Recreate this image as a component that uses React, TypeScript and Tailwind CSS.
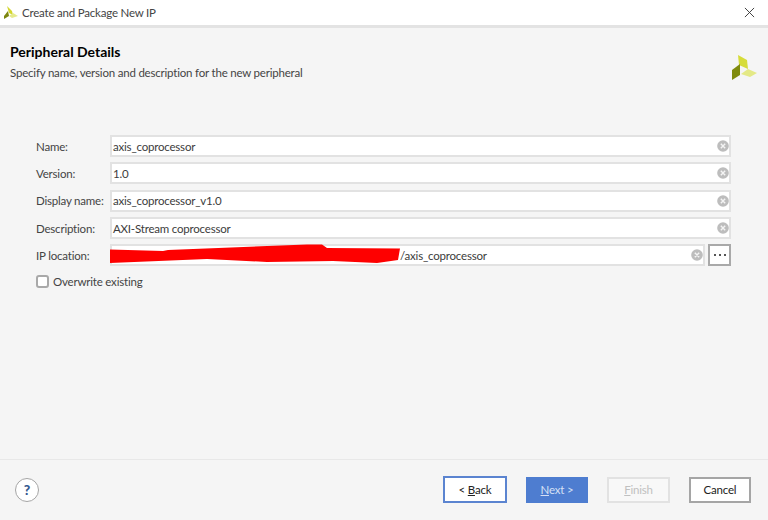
import React from "react";

const font = { fontFamily: 'Lato, "Noto Sans", sans-serif' };

function Logo({ className }: { className: string }) {
  return (
    <svg viewBox="0 0 25 25" className={className}>
      <polygon points="6,0 15,5 16,14 7,10" fill="#d6dc3a" />
      <polygon points="9,19 16,14 25,18 18,22" fill="#e4e986" />
      <polygon points="0,15 8,9 8,20 0,25" fill="#7f8a0c" />
    </svg>
  );
}

function TitleLogo() {
  return (
    <svg viewBox="0 0 15 15" className="w-[15px] h-[15px] shrink-0">
      <polygon points="4,1 9,6 10,10 6,8" fill="#d3d62e" />
      <polygon points="6,11 10,8 15,11 9,13" fill="#e6ea8c" />
      <polygon points="1,11 5,6 6,11 1,14" fill="#7c860f" />
    </svg>
  );
}

function ClearIcon() {
  return (
    <svg viewBox="0 0 12 12" className="w-[12px] h-[12px] shrink-0">
      <circle cx="6" cy="6" r="5.8" fill="#bdbdbd" />
      <path d="M3.8 3.8 L8.2 8.2 M8.2 3.8 L3.8 8.2" stroke="#f4f4f4" strokeWidth="1.4" />
    </svg>
  );
}

function Field({ label, value }: { label: string; value: string }) {
  return (
    <div className="flex items-center h-[22px]">
      <div className="w-[74px] shrink-0 text-[#444] whitespace-nowrap pt-[1px]">{label}</div>
      <div className="flex-1 h-full flex items-center justify-between bg-white border-2 border-[#e2e2e2] pl-[1px] pr-[0px] text-[#3c3c3c]">
        <span className="pt-[1px]">{value}</span>
        <ClearIcon />
      </div>
    </div>
  );
}

function Btn({ children, className }: { children: React.ReactNode; className: string }) {
  return (
    <div className={"h-[26px] flex items-center justify-center border-2 " + className}>{children}</div>
  );
}

export default function App() {
  return (
    <div style={font} className="w-[768px] h-[520px] flex flex-col bg-[#f5f5f5] text-[11.5px] tracking-[-0.2px] overflow-hidden">
      <div className="h-[25px] shrink-0 bg-white flex items-center pl-[3px] pr-[13px] text-[#444]">
        <TitleLogo />
        <span className="ml-[4px]">Create and Package New IP</span>
        <svg viewBox="0 0 12 12" className="w-[11px] h-[11px] ml-auto">
          <path d="M1 1 L11 11 M11 1 L1 11" stroke="#333" strokeWidth="1" fill="none" />
        </svg>
      </div>
      <div className="h-[3px] shrink-0 bg-[#e3e3e3]" />

      <div className="flex items-start justify-between pl-[10px] pr-[11px] pt-[15px] h-[107px] shrink-0">
        <div>
          <div className="text-[14px] tracking-normal font-bold text-black leading-[18px]">Peripheral Details</div>
          <div className="text-[#444] mt-[4px] leading-[16px]">
            Specify name, version and description for the new peripheral
          </div>
        </div>
        <Logo className="w-[25px] h-[25px] mt-[12px]" />
      </div>

      <div className="flex-1 flex flex-col gap-[5.3px] pl-[36px] pr-[37px]">
        <Field label="Name:" value="axis_coprocessor" />
        <Field label="Version:" value="1.0" />
        <Field label="Display name:" value="axis_coprocessor_v1.0" />
        <Field label="Description:" value="AXI-Stream coprocessor" />
        <div className="flex items-center h-[22px]">
          <div className="w-[74px] shrink-0 text-[#444] pt-[1px]">IP location:</div>
          <div className="relative flex-1 h-full flex items-center justify-between bg-white border-2 border-[#e2e2e2] pr-[0px] text-[#3c3c3c]">
            <span className="ml-[288px] pt-[1px]">/axis_coprocessor</span>
            <ClearIcon />
            <svg viewBox="0 0 292 22" className="absolute left-[-2px] top-[-2px] w-[292px] h-[22px]">
              <polygon
                points="0,5.5 53,7 58,6 197,0.5 212,0.5 217,4 290,4.5 288,16 267,19 223,17 157,18 97,15 0,19"
                fill="#fe0000"
              />
            </svg>
          </div>
          <div className="w-[23px] h-full shrink-0 ml-[3px] flex items-center justify-center bg-white border-2 border-[#a9a9a9] text-[#333] leading-none">
            <svg viewBox="0 0 12 2" className="w-[12px] h-[2px]">
              <rect x="0" y="0" width="2" height="2" fill="#555" />
              <rect x="5" y="0" width="2" height="2" fill="#555" />
              <rect x="10" y="0" width="2" height="2" fill="#555" />
            </svg>
          </div>
        </div>
        <div className="flex items-center h-[20px] text-[#444]">
          <div className="w-[13px] h-[13px] rounded-[3px] bg-white border-2 border-[#a9a9a9]" />
          <span className="ml-[4px] pt-[1px]">Overwrite existing</span>
        </div>
      </div>

      <div className="h-[1px] shrink-0 bg-[#e8e8e8]" />
      <div className="h-[60px] shrink-0 flex items-center pl-[15px] pr-[17px] pb-[1px]">
        <div className="w-[24px] h-[24px] rounded-full border border-[#a5a5a5] bg-white flex items-center justify-center text-[#35588f] font-black text-[14px]">
          ?
        </div>
        <div className="ml-auto flex items-center gap-[19px]">
          <Btn className="w-[64px] h-[27px] bg-white border-[#5b84d0] text-[#222]">
            <span>
              &lt; <u>B</u>ack
            </span>
          </Btn>
          <Btn className="w-[62px] bg-[#4e7dd0] border-[#4e7dd0] text-[#d5e0f5]">
            <span>
              <u>N</u>ext &gt;
            </span>
          </Btn>
          <Btn className="w-[63px] bg-[#f8f8f8] border-[#e2e2e2] text-[#c0c0c0]">
            <span>
              <u>F</u>inish
            </span>
          </Btn>
          <Btn className="w-[62px] bg-white border-[#a5a5a5] text-[#222]">Cancel</Btn>
        </div>
      </div>
    </div>
  );
}
